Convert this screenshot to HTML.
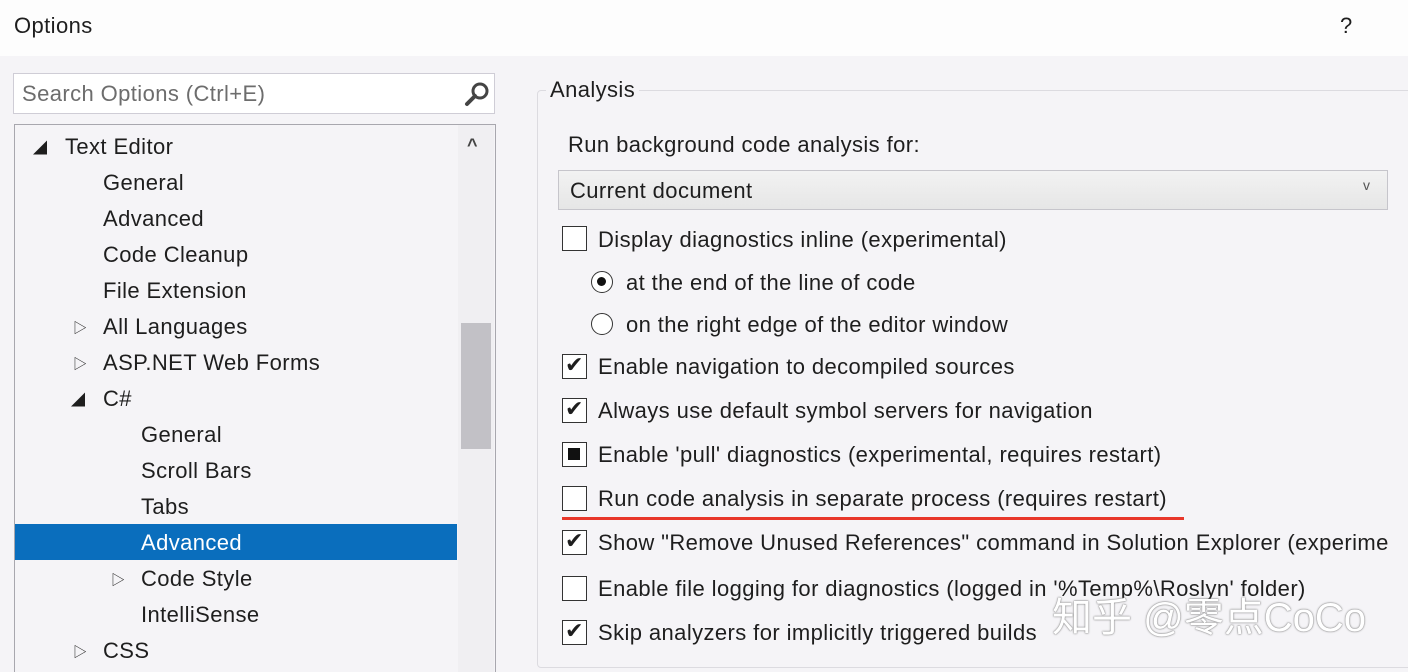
<!DOCTYPE html>
<html><head><meta charset="utf-8"><style>
*{box-sizing:border-box;margin:0;padding:0}
html{width:1408px;height:672px;overflow:hidden}
body{width:1408px;height:672px;overflow:hidden;background:#f5f4f7;font-family:"Liberation Sans","Noto Sans CJK SC",sans-serif;color:#1e1e1e;font-size:22px;letter-spacing:0.4px;position:relative}
.a{position:absolute;white-space:nowrap}
.title{left:0;top:0;width:1408px;height:56px;background:#fdfdfd}
.tree .r{position:absolute;left:0;height:36px;line-height:36px;width:442px}
.cb{position:absolute;width:25px;height:25px;border:1.5px solid #333;background:#fff}
.rd{position:absolute;width:22px;height:22px;border:1.5px solid #333;border-radius:50%;background:#fff}
.tri{position:absolute;font-size:14px}
</style></head><body>
<div class="a title"></div>
<div class="a" style="left:14px;top:13px">Options</div>
<div class="a" style="left:1340px;top:13px">?</div>

<div class="a" style="left:13px;top:73px;width:482px;height:41px;border:1.5px solid #cfcdd6;background:#fff"></div>
<div class="a" style="left:22px;top:81px;color:#6d6d6d">Search Options (Ctrl+E)</div>
<svg class="a" style="left:464px;top:80px" width="28" height="28" viewBox="0 0 28 28"><circle cx="16" cy="11" r="7" fill="none" stroke="#444" stroke-width="3"/><line x1="11" y1="16" x2="3" y2="24" stroke="#444" stroke-width="4" stroke-linecap="round"/></svg>

<div class="a tree" style="left:14px;top:124px;width:482px;height:548px;border:1.5px solid #a8a7ae;border-bottom:none;background:#f5f4f7;overflow:hidden">
 <div class="r" style="top:4px"><span class="tri" style="position:absolute;left:18px;top:1px">◢</span><span style="position:absolute;left:50px">Text Editor</span></div>
 <div class="r" style="top:40px"><span style="position:absolute;left:88px">General</span></div>
 <div class="r" style="top:76px"><span style="position:absolute;left:88px">Advanced</span></div>
 <div class="r" style="top:112px"><span style="position:absolute;left:88px">Code Cleanup</span></div>
 <div class="r" style="top:148px"><span style="position:absolute;left:88px">File Extension</span></div>
 <div class="r" style="top:184px"><span class="tri" style="position:absolute;left:58px;top:1px">▷</span><span style="position:absolute;left:88px">All Languages</span></div>
 <div class="r" style="top:220px"><span class="tri" style="position:absolute;left:58px;top:1px">▷</span><span style="position:absolute;left:88px">ASP.NET Web Forms</span></div>
 <div class="r" style="top:256px"><span class="tri" style="position:absolute;left:56px;top:1px">◢</span><span style="position:absolute;left:88px">C#</span></div>
 <div class="r" style="top:292px"><span style="position:absolute;left:126px">General</span></div>
 <div class="r" style="top:328px"><span style="position:absolute;left:126px">Scroll Bars</span></div>
 <div class="r" style="top:364px"><span style="position:absolute;left:126px">Tabs</span></div>
 <div class="r" style="top:399px;background:#0a6ebd;color:#fff"><span style="position:absolute;left:126px;top:1px">Advanced</span></div>
 <div class="r" style="top:436px"><span class="tri" style="position:absolute;left:96px;top:1px">▷</span><span style="position:absolute;left:126px">Code Style</span></div>
 <div class="r" style="top:472px"><span style="position:absolute;left:126px">IntelliSense</span></div>
 <div class="r" style="top:508px"><span class="tri" style="position:absolute;left:58px;top:1px">▷</span><span style="position:absolute;left:88px">CSS</span></div>
 <div style="position:absolute;left:443px;top:0;width:36px;height:548px;background:#f0eff2"></div>
 <div style="position:absolute;left:446px;top:198px;width:30px;height:126px;background:#c2c1c6"></div>
 <div style="position:absolute;left:452px;top:10px;font-size:18px;font-weight:bold;color:#444">^</div>
</div>

<div class="a" style="left:537px;top:90px;width:900px;height:578px;border:1.5px solid #dcdbe0;border-radius:4px"></div>
<div class="a" style="left:546px;top:77px;background:#f5f4f7;padding:0 4px">Analysis</div>

<div style="position:absolute;left:540px;top:100px;width:850px;height:565px;overflow:hidden">
<div class="a" style="left:28px;top:32px">Run background code analysis for:</div>
<div class="a" style="left:18px;top:70px;width:830px;height:40px;border:1.5px solid #c6c5cb;background:linear-gradient(#f2f2f2,#e6e6e6)"></div>
<div class="a" style="left:30px;top:78px">Current document</div>
<div class="a" style="left:823px;top:77px;font-size:14px;color:#555">v</div>

<div class="cb" style="left:22px;top:126px"></div><div class="a" style="left:58px;top:127px">Display diagnostics inline (experimental)</div>
<div class="rd" style="left:51px;top:171px"><div style="position:absolute;left:5px;top:5px;width:9px;height:9px;border-radius:50%;background:#111"></div></div><div class="a" style="left:86px;top:170px">at the end of the line of code</div>
<div class="rd" style="left:51px;top:213px"></div><div class="a" style="left:86px;top:212px">on the right edge of the editor window</div>
<div class="cb" style="left:22px;top:254px"><span style="position:absolute;left:2px;top:-3px;font-size:22px">✔</span></div><div class="a" style="left:58px;top:254px">Enable navigation to decompiled sources</div>
<div class="cb" style="left:22px;top:298px"><span style="position:absolute;left:2px;top:-3px;font-size:22px">✔</span></div><div class="a" style="left:58px;top:298px">Always use default symbol servers for navigation</div>
<div class="cb" style="left:22px;top:342px"><div style="position:absolute;left:5px;top:5px;width:12px;height:12px;background:#111"></div></div><div class="a" style="left:58px;top:342px">Enable 'pull' diagnostics (experimental, requires restart)</div>
<div class="cb" style="left:22px;top:386px"></div><div class="a" style="left:58px;top:386px">Run code analysis in separate process (requires restart)</div>
<div class="a" style="left:22px;top:417px;width:622px;height:3px;background:#e8372a"></div>
<div class="cb" style="left:22px;top:430px"><span style="position:absolute;left:2px;top:-3px;font-size:22px">✔</span></div><div class="a" style="left:58px;top:430px">Show "Remove Unused References" command in Solution Explorer (experimental)</div>
<div class="cb" style="left:22px;top:476px"></div><div class="a" style="left:58px;top:476px">Enable file logging for diagnostics (logged in '%Temp%\Roslyn' folder)</div>
<div class="cb" style="left:22px;top:520px"><span style="position:absolute;left:2px;top:-3px;font-size:22px">✔</span></div><div class="a" style="left:58px;top:520px">Skip analyzers for implicitly triggered builds</div>
</div>
<div class="a" style="left:1052px;top:585px;font-size:40px;color:#fff;letter-spacing:0;text-shadow:0 0 2px #888,0 0 1px #666">知乎 @零点CoCo</div>
</body></html>
